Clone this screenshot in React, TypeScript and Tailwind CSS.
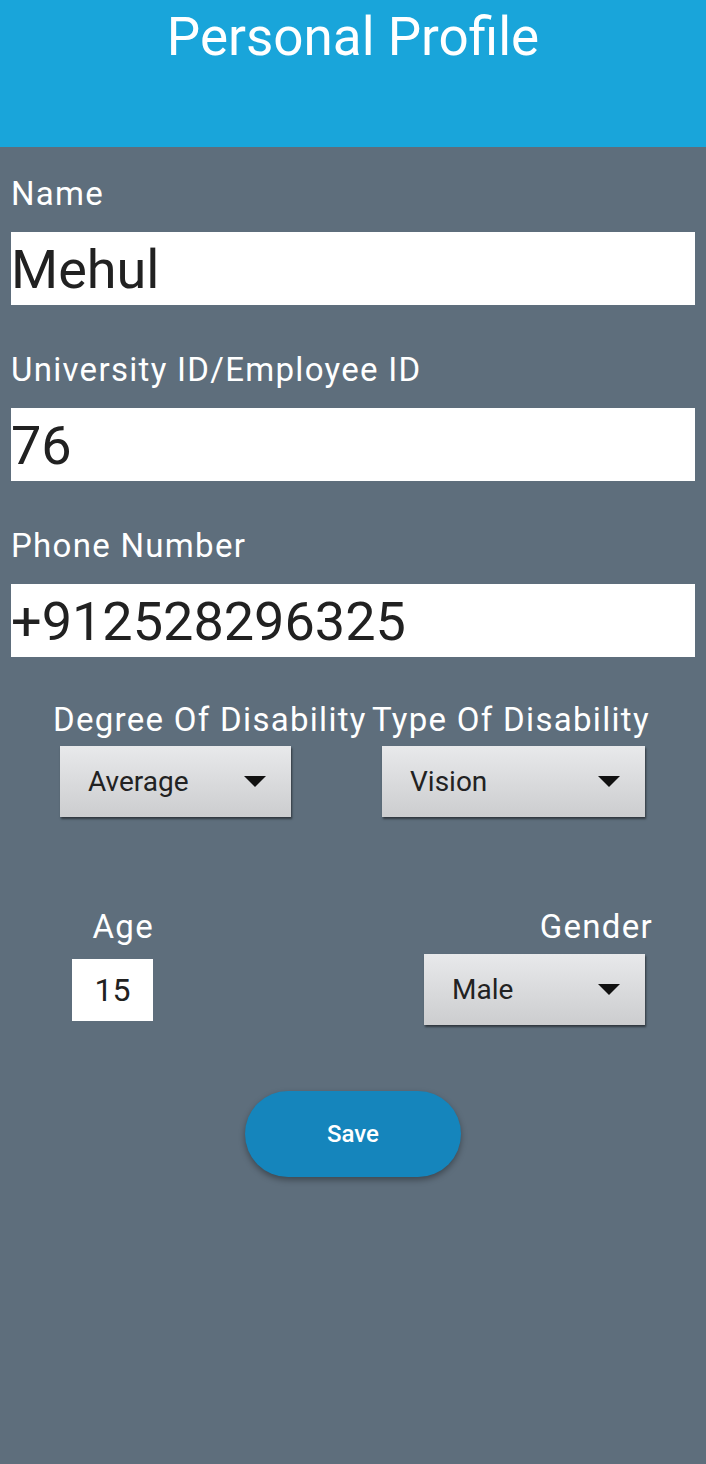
import React from 'react';

type SpinnerProps = {
    value: string;
    width: string;
};

const Arrow: React.FC = () => (
    <svg width="22" height="11" viewBox="0 0 22 11">
        <polygon points="0,0 22,0 11,11" fill="#111" />
    </svg>
);

const Spinner: React.FC<SpinnerProps> = ({ value, width }) => {
    return (
        <div
            className={`${width} flex h-[71px] items-center justify-between bg-gradient-to-b from-[#e8e9eb] to-[#cccdcf] pl-[28px] pr-[25px] text-[28px] text-[#222] shadow-[1px_2px_2px_rgba(0,0,0,0.5)]`}
        >
            <span>{value}</span>
            <Arrow />
        </div>
    );
};

const Field: React.FC<{ label: string; value: string; first?: boolean }> = ({
    label,
    value,
    first,
}) => {
    return (
        <div className={first ? '' : 'mt-[46px]'}>
            <p className="text-[33px] leading-[38px] tracking-[1.3px] text-white">{label}</p>
            <div className="mt-[19px] flex h-[73px] items-center bg-white pt-[2px] text-[54px] text-[#212121]">
                {value}
            </div>
        </div>
    );
};

const App: React.FC = () => {
    return (
        <div className="min-h-[1464px] bg-[#5e6e7c] font-['Roboto','Liberation_Sans',sans-serif]">
            <header className="h-[147px] bg-[#19a5da] pt-[6px] text-center text-[53px] leading-[62px] text-white">
                Personal Profile
            </header>

            <div className="px-[11px] pt-[28px]">
                <Field label="Name" value="Mehul" first />
                <Field label="University ID/Employee ID" value="76" />
                <Field label="Phone Number" value="+912528296325" />

                {/* disability */}
                <div className="mt-[44px] ml-[42px] flex">
                    <div className="w-[319px]">
                        <p className="whitespace-nowrap text-[33px] leading-[38px] tracking-[1.3px] text-white">
                            Degree Of Disability
                        </p>
                        <div className="mt-[7px] ml-[7px]">
                            <Spinner value="Average" width="w-[231px]" />
                        </div>
                    </div>
                    <div>
                        <p className="whitespace-nowrap text-[33px] leading-[38px] tracking-[1.3px] text-white">
                            Type Of Disability
                        </p>
                        <div className="mt-[7px] ml-[10px]">
                            <Spinner value="Vision" width="w-[263px]" />
                        </div>
                    </div>
                </div>

                {/* age + gender */}
                <div className="mt-[91px] flex justify-between">
                    <div className="ml-[61px] flex flex-col items-end">
                        <p className="-mr-[1px] text-[33px] leading-[38px] tracking-[1.3px] text-white">Age</p>
                        <div className="mt-[13px] flex h-[62px] w-[81px] items-center justify-center bg-white text-[32px] text-[#212121]">
                            15
                        </div>
                    </div>
                    <div className="mr-[43px] flex flex-col items-end">
                        <p className="-mr-[1px] text-[33px] leading-[38px] tracking-[1.3px] text-white">Gender</p>
                        <div className="mt-[8px] mr-[7px]">
                            <Spinner value="Male" width="w-[221px]" />
                        </div>
                    </div>
                </div>

                <button
                    type="button"
                    className="mx-auto mt-[66px] block h-[86px] w-[216px] rounded-full bg-[#1585bc] text-[24px] font-medium text-white shadow-[0_3px_6px_rgba(0,0,0,0.35)]"
                >
                    Save
                </button>
            </div>
        </div>
    );
};

export default App;
